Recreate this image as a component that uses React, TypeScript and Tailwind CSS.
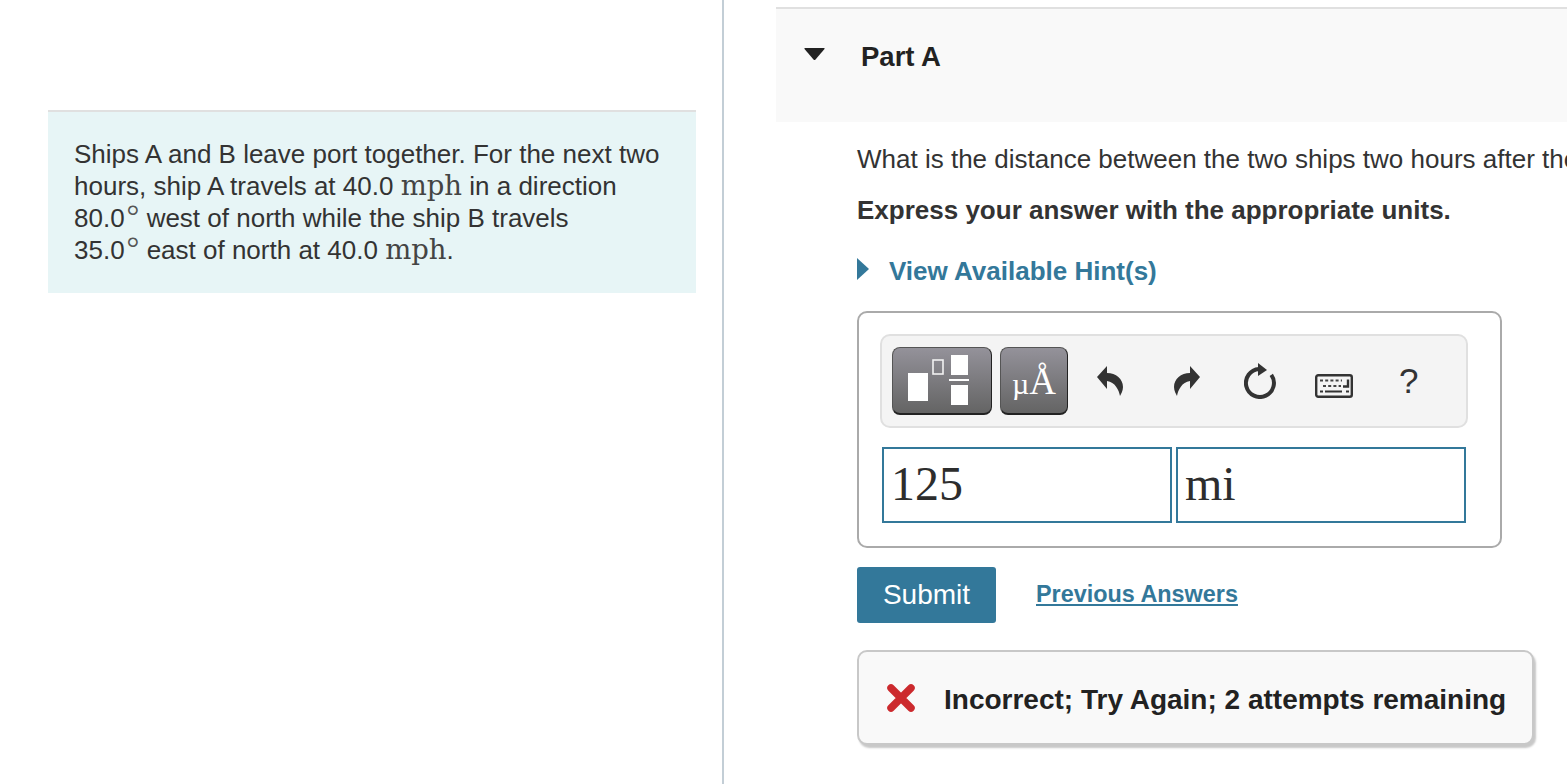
const sans = { fontFamily: '"Liberation Sans", Arial, sans-serif' }

function Unit({ children }: { children: string }) {
  return <span className="font-['DejaVu_Serif',serif] text-[27.5px] leading-none text-[#444]">{children}</span>
}

function Deg() {
  return <span className="ml-[2px] font-['Liberation_Serif',serif] text-[32px] font-light leading-[0] text-[#555]">°</span>
}

function UndoIcon({ flip }: { flip?: boolean }) {
  return (
    <svg width="26" height="30" viewBox="0 0 26 30" className={flip ? '-scale-x-100' : ''}>
      <path d="M0 11 L10 0 V7 C19 7 26 13 26 21 C26 25 24 28 23 30 C22 24 18 16 10 15 V23 Z" fill="#333" />
    </svg>
  )
}

function Toolbar() {
  return (
    <div className="flex h-[94px] w-[588px] items-center rounded-[10px] border-2 border-[#e0e0e0] bg-[#f4f4f4] pl-[10px]">
      <div className="h-[68px] w-[100px] rounded-[8px] border border-b-2 border-[#555] border-b-[#222] border-r-[#222] bg-gradient-to-b from-[#94929a] to-[#646464]">
        <svg width="98" height="65" viewBox="1 1 98 65">
          <rect x="16" y="26" width="20" height="28" fill="#fff" />
          <rect x="41" y="13" width="10" height="14" fill="none" stroke="#f2f2f2" strokeWidth="1.6" />
          <rect x="59" y="8" width="17" height="20" fill="#fff" />
          <rect x="57" y="32" width="20" height="2" fill="#fff" />
          <rect x="59" y="38" width="17" height="20" fill="#fff" />
        </svg>
      </div>
      <div className="ml-[8px] flex h-[68px] w-[68px] items-baseline justify-center rounded-[8px] border border-b-2 border-[#555] border-b-[#222] border-r-[#222] bg-gradient-to-b from-[#94929a] to-[#646464] pt-[9px] font-['Liberation_Serif',serif] leading-[50px] text-white">
        <span className="text-[30px]">µ</span>
        <span className="text-[37px]">Å</span>
      </div>
      <div className="ml-[29px] flex">
        <UndoIcon />
      </div>
      <div className="ml-[51px] flex">
        <UndoIcon flip />
      </div>
      <svg width="32" height="36" viewBox="0 0 32 36" className="ml-[44px]">
        <path d="M15 6 A14 14 0 1 0 27.3 11.8" fill="none" stroke="#333" strokeWidth="4" />
        <path d="M14 0 L23 7 L14 13 Z" fill="#333" />
      </svg>
      <svg width="38" height="24" viewBox="0 0 38 24" className="ml-[39px] mt-[10px]">
        <rect x="1.2" y="1.2" width="35.6" height="21.6" rx="2" fill="#f4f4f4" stroke="#333" strokeWidth="2.4" />
        <path d="M5 6.5h22" stroke="#444" strokeWidth="2.2" strokeDasharray="3 2.2" fill="none" />
        <path d="M8 12h18" stroke="#444" strokeWidth="2.2" strokeDasharray="3 2.2" fill="none" />
        <path d="M33 5.5v7h-5" stroke="#333" strokeWidth="2.4" fill="none" />
        <path d="M5 17.5h3M10 17.5h17M31 17.5h3" stroke="#333" strokeWidth="2.2" fill="none" />
      </svg>
      <span className="mb-[1px] ml-[46px] text-[35px] leading-none text-[#333]">?</span>
    </div>
  )
}

function AnswerBox({ value }: { value: string }) {
  return (
    <div className="flex h-[76px] w-[290px] items-center border-2 border-[#33789a] bg-white pb-[2px] pl-[7px] font-['Liberation_Serif',serif] text-[48px] text-[#2d2d2d]">
      {value}
    </div>
  )
}

export default function App() {
  return (
    <div style={sans} className="flex h-[784px] w-[1567px] overflow-hidden bg-white text-[#333]">
      <div className="w-[724px] shrink-0 border-r-2 border-[#c3ced6] pl-[48px] pr-[26px] pt-[110px]">
        <div className="h-[183px] border-t-2 border-[#e0e0e0] bg-[#e7f5f6] pl-[26px] pt-[26px] text-[26px] leading-[32px]">
          <div className="h-[32px] whitespace-nowrap">Ships A and B leave port together. For the next two</div>
          <div className="h-[32px] whitespace-nowrap">hours, ship A travels at 40.0 <Unit>mph</Unit> in a direction</div>
          <div className="h-[32px] whitespace-nowrap">80.0<Deg /> west of north while the ship B travels</div>
          <div className="h-[32px] whitespace-nowrap">35.0<Deg /> east of north at 40.0 <Unit>mph</Unit>.</div>
        </div>
      </div>

      <div className="min-w-0 flex-1 pl-[52px] pt-[7px]">
        <div className="flex h-[115px] items-start border-t-2 border-[#e0e0e0] bg-[#f9f9f9] pl-[28px] pt-[30px]">
          <svg width="22" height="14" viewBox="0 0 22 14" className="mt-[8px]">
            <path d="M1 1 H20 Q21 1 20.5 2 L11.5 12.5 Q10.5 13.5 9.5 12.5 L0.5 2 Q0 1 1 1 Z" fill="#222" />
          </svg>
          <span className="ml-[35px] text-[27.5px] font-bold leading-[36px] text-[#222]">Part A</span>
        </div>

        <div className="pl-[81px]">
          <div className="mt-[20px] whitespace-nowrap text-[26px] leading-[34px]">
            What is the distance between the two ships two hours after they leave port?
          </div>
          <div className="mt-[17px] whitespace-nowrap text-[26px] font-bold leading-[34px]">
            Express your answer with the appropriate units.
          </div>
          <div className="mt-[27px] flex h-[34px] items-center">
            <svg width="12" height="22" viewBox="0 0 12 22" className="mb-[4px]">
              <path d="M0 0 L12 11 L0 22 Z" fill="#33789a" />
            </svg>
            <span className="ml-[20px] text-[26px] font-bold text-[#33789a]">View Available Hint(s)</span>
          </div>

          <div className="mt-[23px] h-[237px] w-[645px] rounded-[10px] border-2 border-[#aaaaaa] pl-[21px] pt-[21px]">
            <Toolbar />
            <div className="ml-[2px] mt-[19px] flex gap-[4px]">
              <AnswerBox value="125" />
              <AnswerBox value="mi" />
            </div>
          </div>

          <div className="mt-[19px] flex items-center">
            <div className="flex h-[56px] w-[139px] items-center justify-center rounded-[3px] bg-[#33789a] text-[28px] text-white">
              Submit
            </div>
            <span className="ml-[40px] text-[23.4px] font-bold text-[#33789a] underline">Previous Answers</span>
          </div>

          <div className="mt-[27px] flex h-[95px] w-[677px] items-center rounded-[10px] border-2 border-[#c8c8c8] bg-[#f9f9f9] pl-[28px] shadow-[2px_3px_2px_#c8c8c8]">
            <svg width="28" height="28" viewBox="0 0 28 28" className="mt-[1px]">
              <path d="M4 4 L24 24 M24 4 L4 24" stroke="#cc2a2e" strokeWidth="7.5" strokeLinecap="round" />
            </svg>
            <span className="ml-[29px] mt-[5px] whitespace-nowrap text-[28px] font-bold text-[#222]">
              Incorrect; Try Again; 2 attempts remaining
            </span>
          </div>
        </div>
      </div>
    </div>
  )
}
